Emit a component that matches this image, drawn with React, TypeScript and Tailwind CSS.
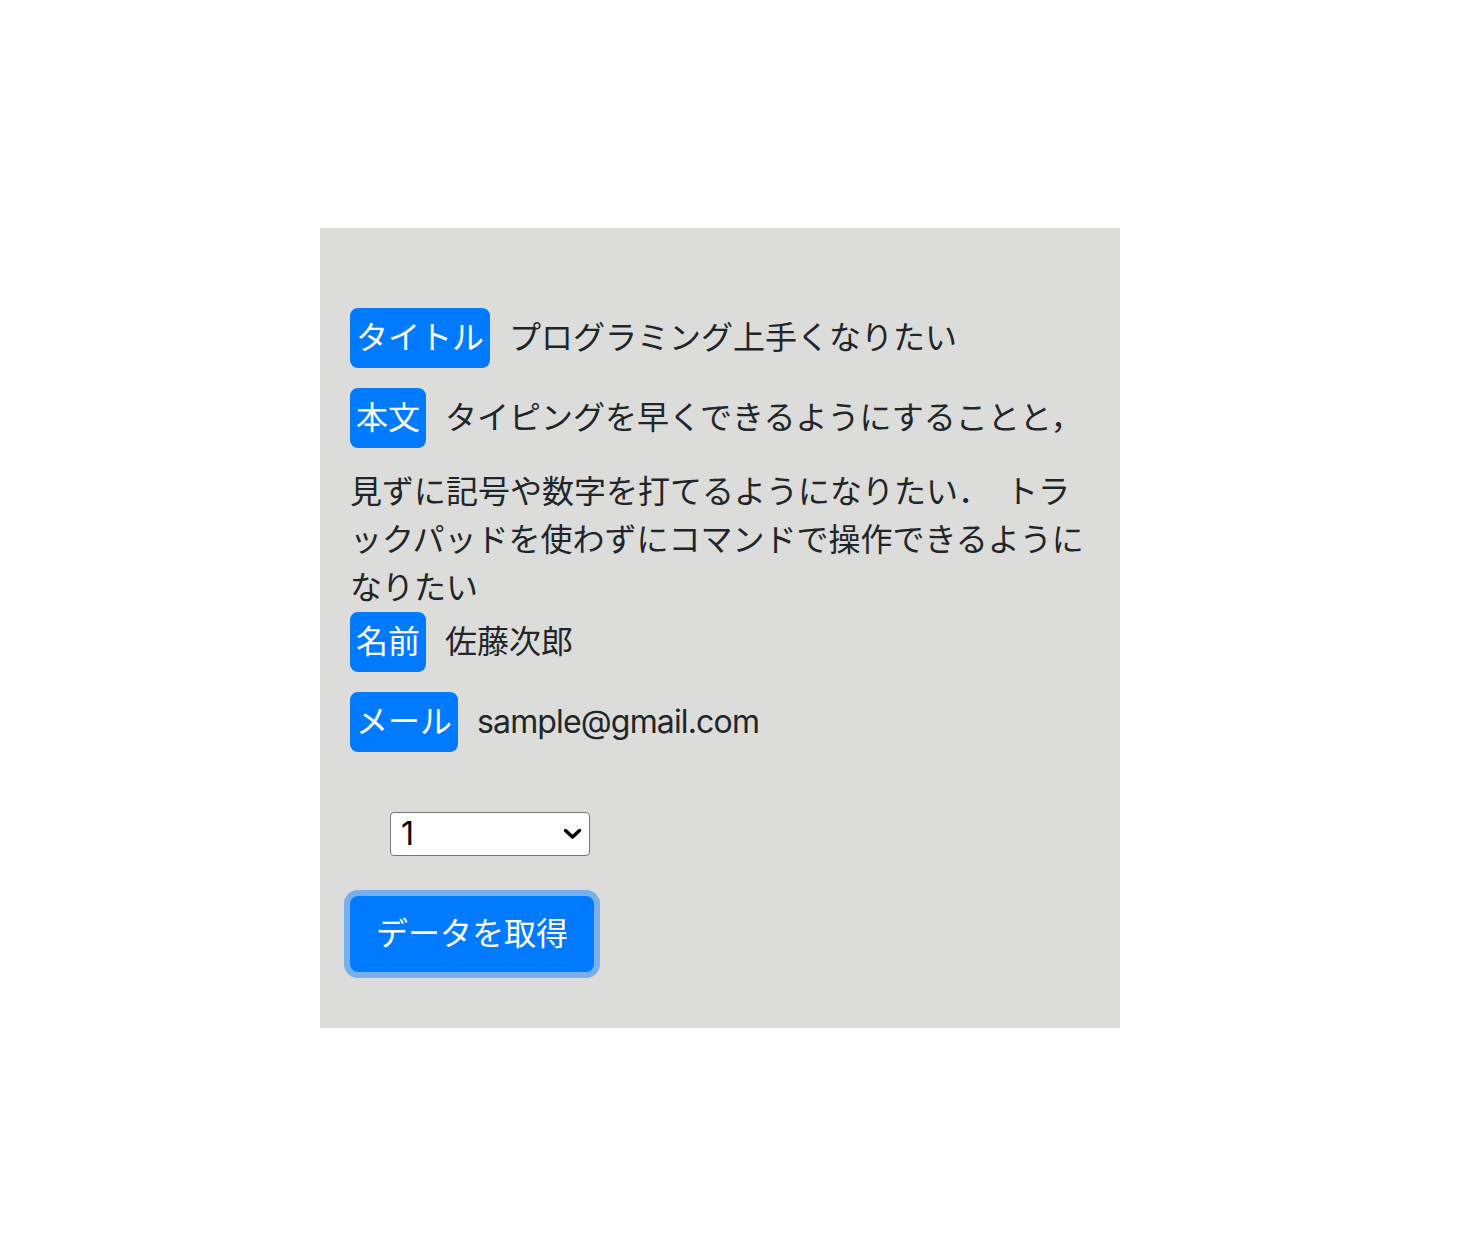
const FONT = "font-['Inter','Noto_Sans_CJK_JP',sans-serif]"

const badge =
  'inline-block bg-[#007bff] text-white px-[6px] py-[6px] rounded-[8px] mb-5 mr-[19px] leading-[48px]'

export default function App() {
  return (
    <div className={`min-h-screen bg-white pt-[228px] pl-[320px] ${FONT}`}>
      <div className="w-[800px] h-[800px] bg-[#dcdcda] px-[30px] pt-[80px] text-[32px] leading-[48px] text-[#212529]">
        <div>
          <span className={badge}>タイトル</span>プログラミング上手くなりたい
        </div>
        <div>
          <span className={badge}>本文</span>
          タイピングを早くできるようにすることと，見ずに記号や数字を打てるようになりたい．　トラックパッドを使わずにコマンドで操作できるようになりたい
        </div>
        <div>
          <span className={badge}>名前</span>佐藤次郎
        </div>
        <div>
          <span className={badge}>メール</span>
          <span className="tracking-[-0.85px]">sample@gmail.com</span>
        </div>

        <div className="relative m-10 w-[200px] h-[44px]">
          <select
            defaultValue="1"
            className="block w-full h-full appearance-none text-[32px] leading-none text-black bg-white border border-[#767676] rounded-[4px] pl-[10px]"
          >
            <option value="1">1</option>
            <option value="2">2</option>
            <option value="3">3</option>
          </select>
          <svg
            className="pointer-events-none absolute right-[8px] top-[16px]"
            width="19"
            height="12"
            viewBox="0 0 19 12"
          >
            <polyline
              points="2.5,2.5 9.5,9 16.5,2.5"
              fill="none"
              stroke="#000"
              strokeWidth="3.4"
              strokeLinecap="round"
              strokeLinejoin="round"
            />
          </svg>
        </div>

        <button className="block w-[244px] h-[76px] rounded-[8px] bg-[#007bff] text-white text-[32px] shadow-[0_0_0_6px_rgba(0,123,255,0.45)]">
          データを取得
        </button>
      </div>
    </div>
  )
}
